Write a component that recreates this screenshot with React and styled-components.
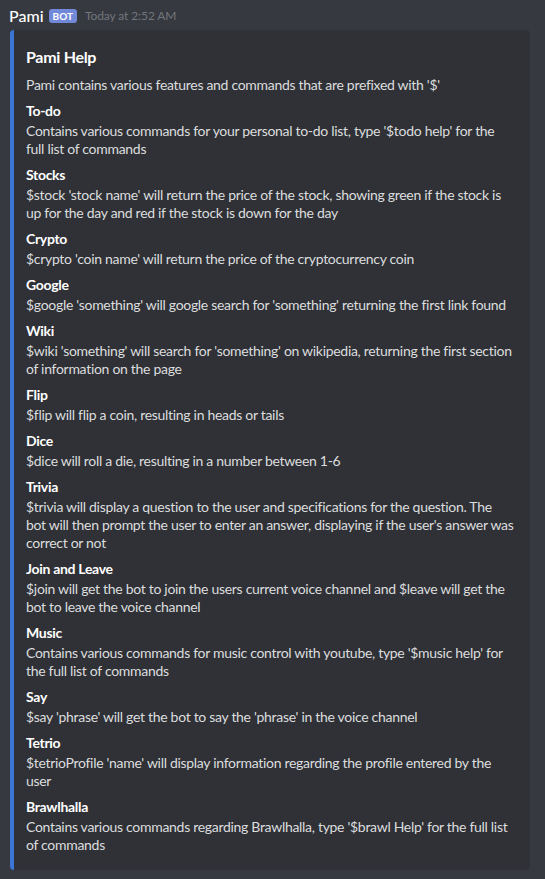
import React from "react";
import styled, { createGlobalStyle } from "styled-components";

const GlobalStyle = createGlobalStyle`
  html, body {
    margin: 0;
    padding: 0;
    background: #36393f;
  }
  body {
    font-family: Lato, "Noto Sans", sans-serif;
    -webkit-font-smoothing: antialiased;
  }
`;

const fields = [
  {
    name: "To-do",
    value:
      "Contains various commands for your personal to-do list, type '$todo help' for the full list of commands"
  },
  {
    name: "Stocks",
    value:
      "$stock 'stock name' will return the price of the stock, showing green if the stock is up for the day and red if the stock is down for the day"
  },
  {
    name: "Crypto",
    value: "$crypto 'coin name' will return the price of the cryptocurrency coin"
  },
  {
    name: "Google",
    value:
      "$google 'something' will google search for 'something' returning the first link found"
  },
  {
    name: "Wiki",
    value:
      "$wiki 'something' will search for 'something' on wikipedia, returning the first section of information on the page"
  },
  { name: "Flip", value: "$flip will flip a coin, resulting in heads or tails" },
  {
    name: "Dice",
    value: "$dice will roll a die, resulting in a number between 1-6"
  },
  {
    name: "Trivia",
    value:
      "$trivia will display a question to the user and specifications for the question. The bot will then prompt the user to enter an answer, displaying if the user's answer was correct or not"
  },
  {
    name: "Join and Leave",
    value:
      "$join will get the bot to join the users current voice channel and $leave will get the bot to leave the voice channel"
  },
  {
    name: "Music",
    value:
      "Contains various commands for music control with youtube, type '$music help' for the full list of commands"
  },
  {
    name: "Say",
    value: "$say 'phrase' will get the bot to say the 'phrase' in the voice channel"
  },
  {
    name: "Tetrio",
    value:
      "$tetrioProfile 'name' will display information regarding the profile entered by the user"
  },
  {
    name: "Brawlhalla",
    value:
      "Contains various commands regarding Brawlhalla, type '$brawl Help' for the full list of commands"
  }
];

const Message = styled.div`
  padding: 5px 15px 9px 9px;
`;

const Header = styled.div`
  display: flex;
  align-items: center;
  height: 22px;
`;

const Username = styled.span`
  color: #ffffff;
  font-size: 16px;
  font-weight: 500;
  line-height: 22px;
`;

const BotTag = styled.span`
  display: inline-flex;
  align-items: center;
  height: 14px;
  margin-left: 5px;
  padding: 0 4px;
  border-radius: 3px;
  background: #7289da;
  color: #ffffff;
  font-size: 10px;
  font-weight: 700;
  line-height: 14px;
`;

const Timestamp = styled.span`
  margin-left: 8px;
  color: #72767d;
  font-size: 12px;
  line-height: 22px;
  letter-spacing: -0.1px;
`;

const Embed = styled.div`
  margin-top: 3px;
  margin-left: 1px;
  background: #2f3136;
  border-left: 4px solid #3b75d6;
  border-radius: 4px;
  padding: 8px 16px 16px 12px;
  letter-spacing: -0.3px;
`;

const Title = styled.div`
  margin-top: 8px;
  color: #ffffff;
  font-size: 16px;
  font-weight: 700;
  line-height: 22px;
`;

const Description = styled.div`
  margin-top: 8px;
  color: #dcddde;
  font-size: 14px;
  line-height: 18px;
`;

const Fields = styled.div`
  display: grid;
  row-gap: 8px;
  margin-top: 8px;
`;

const FieldName = styled.div`
  color: #ffffff;
  font-size: 14px;
  font-weight: 700;
  line-height: 18px;
  margin-bottom: 2px;
`;

const FieldValue = styled.div`
  color: #dcddde;
  font-size: 14px;
  line-height: 18px;
`;

export default function App() {
  return (
    <>
      <GlobalStyle />
      <Message>
        <Header>
          <Username>Pami</Username>
          <BotTag>BOT</BotTag>
          <Timestamp>Today at 2:52 AM</Timestamp>
        </Header>
        <Embed>
          <Title>Pami Help</Title>
          <Description>
            Pami contains various features and commands that are prefixed with '$'
          </Description>
          <Fields>
            {fields.map(f => (
              <div key={f.name}>
                <FieldName>{f.name}</FieldName>
                <FieldValue>{f.value}</FieldValue>
              </div>
            ))}
          </Fields>
        </Embed>
      </Message>
    </>
  );
}
